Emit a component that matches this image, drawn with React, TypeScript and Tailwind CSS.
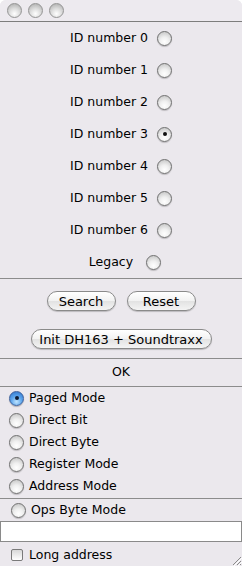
import React from "react";

const font = { fontFamily: '"DejaVu Sans", "Lucida Grande", sans-serif' };

function Radio({ on, blue }: { on?: boolean; blue?: boolean }) {
  if (blue) {
    return (
      <span className="relative grid h-[15px] w-[15px] shrink-0 place-items-center rounded-full border border-[#3a5f9c] bg-[radial-gradient(circle_at_50%_75%,#bfe4ff_0%,#5ea6ec_45%,#2a6fc9_100%)] shadow-[0_1px_1px_rgba(0,0,0,0.25)]">
        <span className="h-[4px] w-[4px] rounded-full bg-[#0c1a33]" />
      </span>
    );
  }
  return (
    <span className="relative grid h-[15px] w-[15px] shrink-0 place-items-center rounded-full border border-[#707070] bg-[radial-gradient(circle_at_50%_75%,#ffffff_0%,#efefef_40%,#bdbdbd_100%)] shadow-[0_1px_1px_rgba(0,0,0,0.2)]">
      {on && <span className="h-[4px] w-[4px] rounded-full bg-[#111]" />}
    </span>
  );
}

function Pill({ children, className = "" }: { children: React.ReactNode; className?: string }) {
  return (
    <button
      className={`box-border h-[20px] shrink-0 rounded-full border border-[#8a8a8a] bg-[linear-gradient(#ffffff,#f2f2f2_50%,#e2e2e2_51%,#f4f4f4)] text-[13px] leading-none text-black shadow-[0_1px_1px_rgba(0,0,0,0.2)] ${className}`}
    >
      {children}
    </button>
  );
}

function Light() {
  return (
    <span className="block h-[15px] w-[15px] shrink-0 rounded-full border border-[#949494] bg-[radial-gradient(circle_at_50%_75%,#ffffff_0%,#dcdcdc_45%,#a6a6a6_100%)]" />
  );
}

const ids = ["ID number 0", "ID number 1", "ID number 2", "ID number 3", "ID number 4", "ID number 5", "ID number 6"];
const modes = ["Paged Mode", "Direct Bit", "Direct Byte", "Register Mode", "Address Mode"];

export default function App() {
  return (
    <div style={font} className="h-[566px] w-[242px] overflow-hidden bg-white text-black">
      <div className="relative flex h-full flex-col overflow-hidden rounded-t-[6px] bg-[#ebe8ed] text-[12.5px]">
        {/* title bar */}
        <div className="flex h-[22px] shrink-0 items-start gap-[6px] border-b border-[#7d7d7d] bg-[#edeaef] pl-[7px] pt-[3px]">
          <Light />
          <Light />
          <Light />
        </div>

        {/* ID selection */}
        <div className="flex shrink-0 flex-col border-b border-[#8c8c8c]">
          {ids.map((label, i) => (
            <div key={label} className="flex h-[32px] items-center justify-center gap-[9px]">
              <span>{label}</span>
              <Radio on={i === 3} />
            </div>
          ))}
          <div className="flex h-[32px] items-center justify-center gap-[13px] pl-[8px]">
            <span>Legacy</span>
            <Radio />
          </div>
        </div>

        {/* actions */}
        <div className="flex shrink-0 flex-col items-center border-b border-[#8c8c8c] pb-[9px] pt-[12px]">
          <div className="flex gap-[11px]">
            <Pill className="w-[69px]">Search</Pill>
            <Pill className="w-[69px]">Reset</Pill>
          </div>
          <Pill className="mt-[18px] w-[181px]">Init DH163 + Soundtraxx</Pill>
        </div>

        <div className="flex h-[28px] shrink-0 items-center justify-center border-b border-[#8c8c8c]">OK</div>

        {/* programming modes */}
        <div className="flex shrink-0 flex-col border-b border-[#8c8c8c] pb-[1px]">
          {modes.map((m, i) => (
            <div key={m} className="flex h-[22px] items-center gap-[5px] pl-[9px]">
              <Radio blue={i === 0} />
              <span>{m}</span>
            </div>
          ))}
        </div>

        <div className="flex h-[22px] shrink-0 items-center gap-[5px] pl-[11px]">
          <Radio />
          <span>Ops Byte Mode</span>
        </div>
        <input className="h-[21px] w-full shrink-0 border border-[#8a8a8a] bg-white px-1 text-[13px] outline-none" />
        <div className="flex flex-1 items-center gap-[6px] pl-[11px] pt-[2px]">
          <span className="h-[12px] w-[12px] rounded-[2px] border border-[#7a7a7a] bg-[linear-gradient(#d8d8d8,#ffffff)]" />
          <span>Long address</span>
        </div>

        {/* resize grip */}
        <svg className="absolute bottom-0 right-0" width="12" height="12" viewBox="0 0 12 12">
          <path d="M11 3 L3 11 M11 7 L7 11 M11 10 L10 11" stroke="#8a8a8a" strokeWidth="1" />
          <path d="M12 4 L4 12 M12 8 L8 12" stroke="#ffffff" strokeWidth="1" />
        </svg>
      </div>
    </div>
  );
}
